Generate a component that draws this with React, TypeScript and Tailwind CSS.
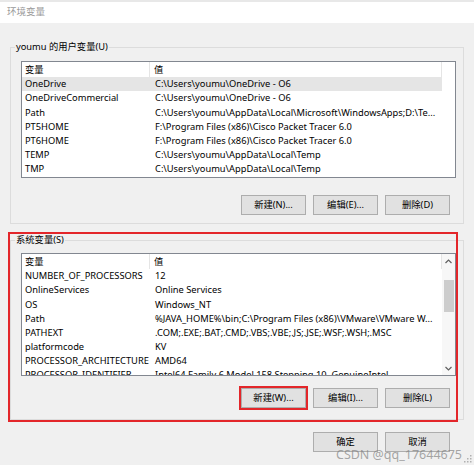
type Row = [string, string];

const userVars: Row[] = [
  ["OneDrive", "C:\\Users\\youmu\\OneDrive - O6"],
  ["OneDriveCommercial", "C:\\Users\\youmu\\OneDrive - O6"],
  ["Path", "C:\\Users\\youmu\\AppData\\Local\\Microsoft\\WindowsApps;D:\\Te..."],
  ["PT5HOME", "F:\\Program Files (x86)\\Cisco Packet Tracer 6.0"],
  ["PT6HOME", "F:\\Program Files (x86)\\Cisco Packet Tracer 6.0"],
  ["TEMP", "C:\\Users\\youmu\\AppData\\Local\\Temp"],
  ["TMP", "C:\\Users\\youmu\\AppData\\Local\\Temp"],
];

const sysVars: Row[] = [
  ["NUMBER_OF_PROCESSORS", "12"],
  ["OnlineServices", "Online Services"],
  ["OS", "Windows_NT"],
  ["Path", "%JAVA_HOME%\\bin;C:\\Program Files (x86)\\VMware\\VMware W..."],
  ["PATHEXT", ".COM;.EXE;.BAT;.CMD;.VBS;.VBE;.JS;.JSE;.WSF;.WSH;.MSC"],
  ["platformcode", "KV"],
  ["PROCESSOR_ARCHITECTURE", "AMD64"],
  ["PROCESSOR_IDENTIFIER", "Intel64 Family 6 Model 158 Stepping 10, GenuineIntel"],
];

function Btn({ label, marked }: { label: string; marked?: boolean }) {
  return (
    <button
      className={`w-[65px] h-[20px] bg-[#e1e1e1] border border-[#adadad] text-[9.3px] text-black leading-none flex items-center justify-center ${
        marked ? "outline-2 outline-[#e3262a]" : ""
      }`}
    >
      {label}
    </button>
  );
}

function ScrollBar() {
  return (
    <div className="w-[13px] h-full flex flex-col items-center bg-[#f7f7f7]">
      <div className="h-[14px] flex items-center justify-center">
        <svg width="7" height="5" viewBox="0 0 7 5">
          <polyline points="0.5,4 3.5,1 6.5,4" fill="none" stroke="#606060" strokeWidth="1.2" />
        </svg>
      </div>
      <div className="mt-[12px] w-[10px] h-[32px] bg-[#cdcdcd]" />
      <div className="flex-1" />
      <div className="h-[14px] flex items-center justify-center">
        <svg width="7" height="5" viewBox="0 0 7 5">
          <polyline points="0.5,1 3.5,4 6.5,1" fill="none" stroke="#606060" strokeWidth="1.2" />
        </svg>
      </div>
    </div>
  );
}

function VarList({ rows, height, highlight, scroll }: { rows: Row[]; height: string; highlight?: boolean; scroll?: boolean }) {
  return (
    <div className={`flex ${height} border border-[#828790] bg-white overflow-hidden`}>
      <div className="flex-1 overflow-hidden text-[9.3px] text-black">
        <div className="flex h-[15px]">
          <div className="w-[128px] pl-[3px] border-r border-[#e5e5e5] flex items-center">变量</div>
          <div className="w-[292px] pl-[4px] border-r border-[#e5e5e5] flex items-center">值</div>
        </div>
        {rows.map(([k, v], i) => (
          <div
            key={k + i}
            className={`flex w-[420px] h-[14.2px] items-center whitespace-nowrap ${
              highlight && i === 0 ? "bg-[#e5e5e5]" : ""
            }`}
          >
            <div className="w-[128px] shrink-0 pl-[3px]">{k}</div>
            <div className="pl-[5px]">{v}</div>
          </div>
        ))}
      </div>
      {scroll && <ScrollBar />}
    </div>
  );
}

export default function App() {
  return (
    <div className="relative w-[474px] h-[465px] overflow-hidden bg-[#f0f0f0] font-['Noto_Sans','Noto_Sans_CJK_SC',sans-serif]">
      <div className="h-[23px] bg-white border-t-2 border-[#e8e8e8] flex items-center pl-[7px] text-[9.5px] text-[#9a9a9a]">
        环境变量
      </div>

      <div className="px-[10px]">
        <fieldset className="mt-[16px] border border-[#dcdcdc] pb-[8px]">
          <legend className="ml-[4px] px-[1px] h-[16px] leading-[16px] text-[9.3px] text-black">youmu 的用户变量(U)</legend>
          <div className="pl-[10px] pr-[7px]">
            <div className="mt-[6px]">
              <VarList rows={userVars} height="h-[117px]" highlight />
            </div>
            <div className="mt-[17px] flex justify-end gap-[7px] pr-[6px]">
              <Btn label="新建(N)..." />
              <Btn label="编辑(E)..." />
              <Btn label="删除(D)" />
            </div>
          </div>
        </fieldset>

        <div className="relative mt-[8px]">
          <fieldset className="border border-[#dcdcdc] pb-[11px]">
            <legend className="ml-[4px] px-[1px] h-[16px] leading-[16px] text-[9.3px] text-black">系统变量(S)</legend>
            <div className="pl-[10px] pr-[7px]">
              <div className="mt-[5px]">
                <VarList rows={sysVars} height="h-[123px]" scroll />
              </div>
              <div className="mt-[12px] flex justify-end gap-[7px] pr-[6px]">
                <Btn label="新建(W)..." marked />
                <Btn label="编辑(I)..." />
                <Btn label="删除(L)" />
              </div>
            </div>
          </fieldset>
          <div className="absolute -left-[2px] top-0 right-[6px] -bottom-[2px] border-2 border-[#e3262a] pointer-events-none" />
        </div>

        <div className="mt-[12px] flex justify-end gap-[7px] pr-[14px]">
          <Btn label="确定" />
          <Btn label="取消" />
        </div>
      </div>

      <div className="absolute right-[12px] bottom-[4px] text-[12.5px] leading-none text-[rgba(130,130,130,0.7)] whitespace-nowrap">
        CSDN @qq_17644675
      </div>
      <svg className="absolute right-[2px] bottom-[2px]" width="8" height="8" viewBox="0 0 8 8">
        <rect x="6" y="0" width="1.5" height="1.5" fill="#b0b0b0" />
        <rect x="3" y="3" width="1.5" height="1.5" fill="#b0b0b0" />
        <rect x="6" y="3" width="1.5" height="1.5" fill="#b0b0b0" />
        <rect x="0" y="6" width="1.5" height="1.5" fill="#b0b0b0" />
        <rect x="3" y="6" width="1.5" height="1.5" fill="#b0b0b0" />
        <rect x="6" y="6" width="1.5" height="1.5" fill="#b0b0b0" />
      </svg>
    </div>
  );
}
